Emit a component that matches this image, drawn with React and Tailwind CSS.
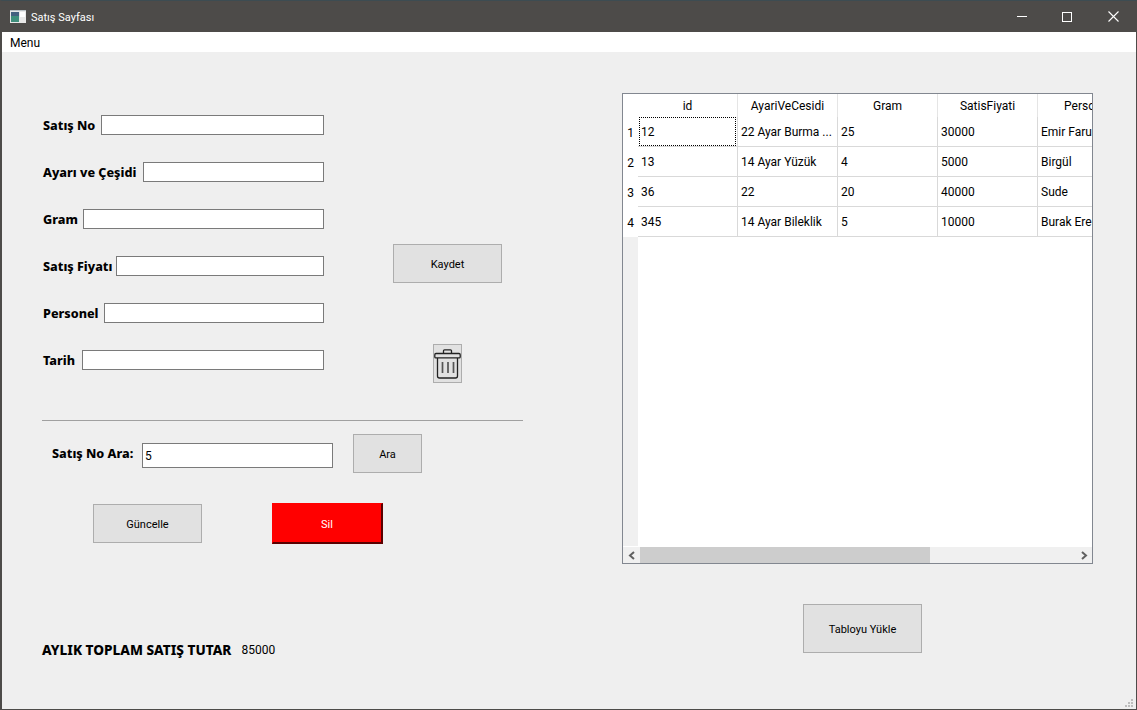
import React from 'react';

const fields = [
  { label: 'Satış No', width: 'w-[223px]' },
  { label: 'Ayarı ve Çeşidi', width: 'w-[181px]' },
  { label: 'Gram', width: 'w-[241px]' },
  { label: 'Satış Fiyatı', width: 'w-[208px]' },
  { label: 'Personel', width: 'w-[220px]' },
  { label: 'Tarih', width: 'w-[242px]' },
];

const columns = ['id', 'AyariVeCesidi', 'Gram', 'SatisFiyati', 'Personel'];

const rows = [
  ['12', '22 Ayar Burma ...', '25', '30000', 'Emir Faruk'],
  ['13', '14 Ayar Yüzük', '4', '5000', 'Birgül'],
  ['36', '22', '20', '40000', 'Sude'],
  ['345', '14 Ayar Bileklik', '5', '10000', 'Burak Eren'],
];

const AppIcon = () => (
  <svg width="16" height="13" viewBox="0 0 16 13">
    <rect x="0" y="0" width="16" height="13" fill="#e8e8e8" />
    <rect x="1" y="2" width="8" height="10" fill="#3f8f7c" />
    <rect x="1" y="2" width="8" height="4" fill="#44617f" />
    <rect x="10" y="2" width="5" height="5" fill="#fdfdfd" />
    <rect x="0" y="0" width="16" height="1" fill="#b9c0c4" />
  </svg>
);

const TrashIcon = () => (
  <svg width="27" height="30" viewBox="0 0 27 30" fill="none" stroke="#222">
    <path d="M9.5 4.5V1.8a1 1 0 0 1 1-1h6a1 1 0 0 1 1 1v2.7" strokeWidth="1.3" />
    <path d="M2 4.5h23a1.2 1.2 0 0 1 1.2 1.2v2.2a1 1 0 0 1-1 1H1.8a1 1 0 0 1-1-1V5.7A1.2 1.2 0 0 1 2 4.5z" strokeWidth="1.3" />
    <path d="M3.5 9v18a2 2 0 0 0 2 2h16a2 2 0 0 0 2-2V9" strokeWidth="1.3" />
    <path d="M8.5 13v11M14 13v11M19.5 13v11" stroke="#555" strokeWidth="1.7" />
  </svg>
);

const ResizeGrip = () => (
  <svg width="9" height="9" viewBox="0 0 9 9" fill="#bdbdbd">
    <rect x="6" y="0" width="2" height="2" />
    <rect x="3" y="3" width="2" height="2" />
    <rect x="6" y="3" width="2" height="2" />
    <rect x="0" y="6" width="2" height="2" />
    <rect x="3" y="6" width="2" height="2" />
    <rect x="6" y="6" width="2" height="2" />
  </svg>
);

const Input = ({ className, value = '' }) => (
  <input
    readOnly
    value={value}
    className={`border border-[#7a7a7a] bg-white px-[2px] text-[12px] text-black outline-none ${className}`}
  />
);

const Button = ({ children, className }) => (
  <button className={`flex items-center justify-center border border-[#adadad] bg-[#e1e1e1] text-[11px] text-black ${className}`}>
    {children}
  </button>
);

const Chevron = ({ dir }) => (
  <svg width="8" height="9" viewBox="0 0 8 9" fill="none" stroke="#606060" strokeWidth="2">
    <path d={dir === 'left' ? 'M6 1 2 4.5 6 8' : 'M2 1 6 4.5 2 8'} />
  </svg>
);

const DataTable = () => (
  <div className="flex h-[471px] w-[471px] flex-col overflow-hidden border border-[#828790] bg-white text-[12px] text-black">
    <div className="flex h-[23px] shrink-0 pl-[15px]">
      {columns.map((col) => (
        <div key={col} className="flex w-[100px] shrink-0 items-center justify-center border-r border-[#e5e5e5]">
          {col}
        </div>
      ))}
    </div>
    <div className="flex min-h-0 flex-1">
      <div className="flex w-[15px] shrink-0 flex-col bg-[#f0f0f0]">
        {rows.map((row, i) => (
          <div key={row[0]} className="flex h-[30px] items-center justify-center bg-white pt-[2px]">
            {i + 1}
          </div>
        ))}
      </div>
      <div className="min-w-0 flex-1 overflow-hidden">
        {rows.map((row, i) => (
          <div key={row[0]} className="flex h-[30px] w-[500px] border-b border-[#d9d9d9]">
            {row.map((cell, j) => (
              <div key={j} className="relative flex w-[100px] shrink-0 items-center whitespace-nowrap border-r border-[#d9d9d9] pl-[3px]">
                {i === 0 && j === 0 && (
                  <span className="absolute inset-x-[1px] inset-y-0 border border-dotted border-black" />
                )}
                {cell}
              </div>
            ))}
          </div>
        ))}
      </div>
    </div>
    <div className="flex h-[17px] shrink-0 items-center border-t border-white bg-[#f0f0f0]">
      <div className="flex w-[17px] shrink-0 justify-center"><Chevron dir="left" /></div>
      <div className="h-full w-[290px] bg-[#cdcdcd]" />
      <div className="flex-1" />
      <div className="flex w-[17px] shrink-0 justify-center"><Chevron dir="right" /></div>
    </div>
  </div>
);

const App = () => (
  <div className="relative flex h-[710px] w-[1137px] flex-col overflow-hidden border-b border-l-2 border-r border-t border-b-[#4d4b49] border-l-[#4d4b49] border-r-[#4d4b49] border-t-[#3d4c52] bg-[#efefef] font-['Roboto',sans-serif]">
    <div className="flex h-[31px] shrink-0 items-center bg-[#4d4b49] pl-[8px] text-white">
      <AppIcon />
      <span className="ml-[5px] pt-[4px] text-[11px]">Satış Sayfası</span>
      <div className="ml-auto flex h-full items-center">
        <div className="flex w-[42px] justify-center">
          <span className="h-[1px] w-[10px] bg-white" />
        </div>
        <div className="flex w-[48px] justify-center">
          <span className="h-[10px] w-[10px] border border-white" />
        </div>
        <div className="flex w-[45px] justify-center">
          <svg width="11" height="11" viewBox="0 0 11 11" stroke="#fff" strokeWidth="1.1">
            <path d="M.5.5l10 10M10.5.5l-10 10" />
          </svg>
        </div>
      </div>
    </div>
    <div className="flex h-[20px] shrink-0 items-center bg-white pl-[8px] pt-[2px] text-[12px] text-black">Menu</div>

    <div className="flex flex-1">
      <div className="w-[620px] shrink-0">
        <div className="flex pt-[63px]">
          <div className="flex w-[322px] flex-col gap-[27px] pl-[41px]">
            {fields.map((f) => (
              <div key={f.label} className="flex h-[20px] items-center justify-between">
                <span className="whitespace-nowrap pt-[2px] font-['Noto_Sans',sans-serif] text-[12.6px] font-extrabold text-black">{f.label}</span>
                <Input className={`h-[20px] ${f.width}`} />
              </div>
            ))}
          </div>
          <div className="ml-[69px] flex flex-col items-start">
            <Button className="mt-[129px] h-[39px] w-[109px] pt-[4px]">Kaydet</Button>
            <Button className="ml-[40px] mt-[61px] h-[39px] w-[29px] overflow-visible">
              <span className="-mx-2 shrink-0"><TrashIcon /></span>
            </Button>
          </div>
        </div>

        <div className="ml-[40px] mt-[37px] h-[1px] w-[481px] bg-[#a0a0a0]" />

        <div className="mt-[13px] flex items-center pl-[50px]">
          <span className="w-[82px] overflow-hidden whitespace-nowrap pt-[2px] font-['Noto_Sans',sans-serif] text-[12.6px] font-extrabold text-black">Satış No Ara:</span>
          <Input className="ml-[8px] mt-[4px] h-[25px] w-[191px]" value="5" />
          <Button className="ml-[20px] h-[39px] w-[69px] pt-[4px]">Ara</Button>
        </div>

        <div className="mt-[30px] flex items-center pl-[91px]">
          <Button className="h-[39px] w-[109px] pt-[4px]">Güncelle</Button>
          <button className="ml-[70px] flex h-[41px] w-[111px] items-center justify-center border border-b-2 border-r-2 border-[#ff0000] border-b-[#5a0000] border-r-[#5a0000] bg-[#ff0000] pt-[4px] text-[11px] text-white">
            Sil
          </button>
        </div>

        <div className="mt-[96px] flex items-center pl-[40px]">
          <span className="font-['Noto_Sans',sans-serif] text-[13.6px] font-extrabold text-black">AYLIK TOPLAM SATIŞ TUTAR</span>
          <span className="ml-[10px] text-[12px] text-black">85000</span>
        </div>
      </div>

      <div className="flex flex-col pt-[41px]">
        <DataTable />
        <Button className="ml-[181px] mt-[40px] h-[49px] w-[119px] pt-[4px]">Tabloyu Yükle</Button>
      </div>
    </div>

    <div className="absolute bottom-[1px] right-[2px] leading-none"><ResizeGrip /></div>
  </div>
);

export default App;
